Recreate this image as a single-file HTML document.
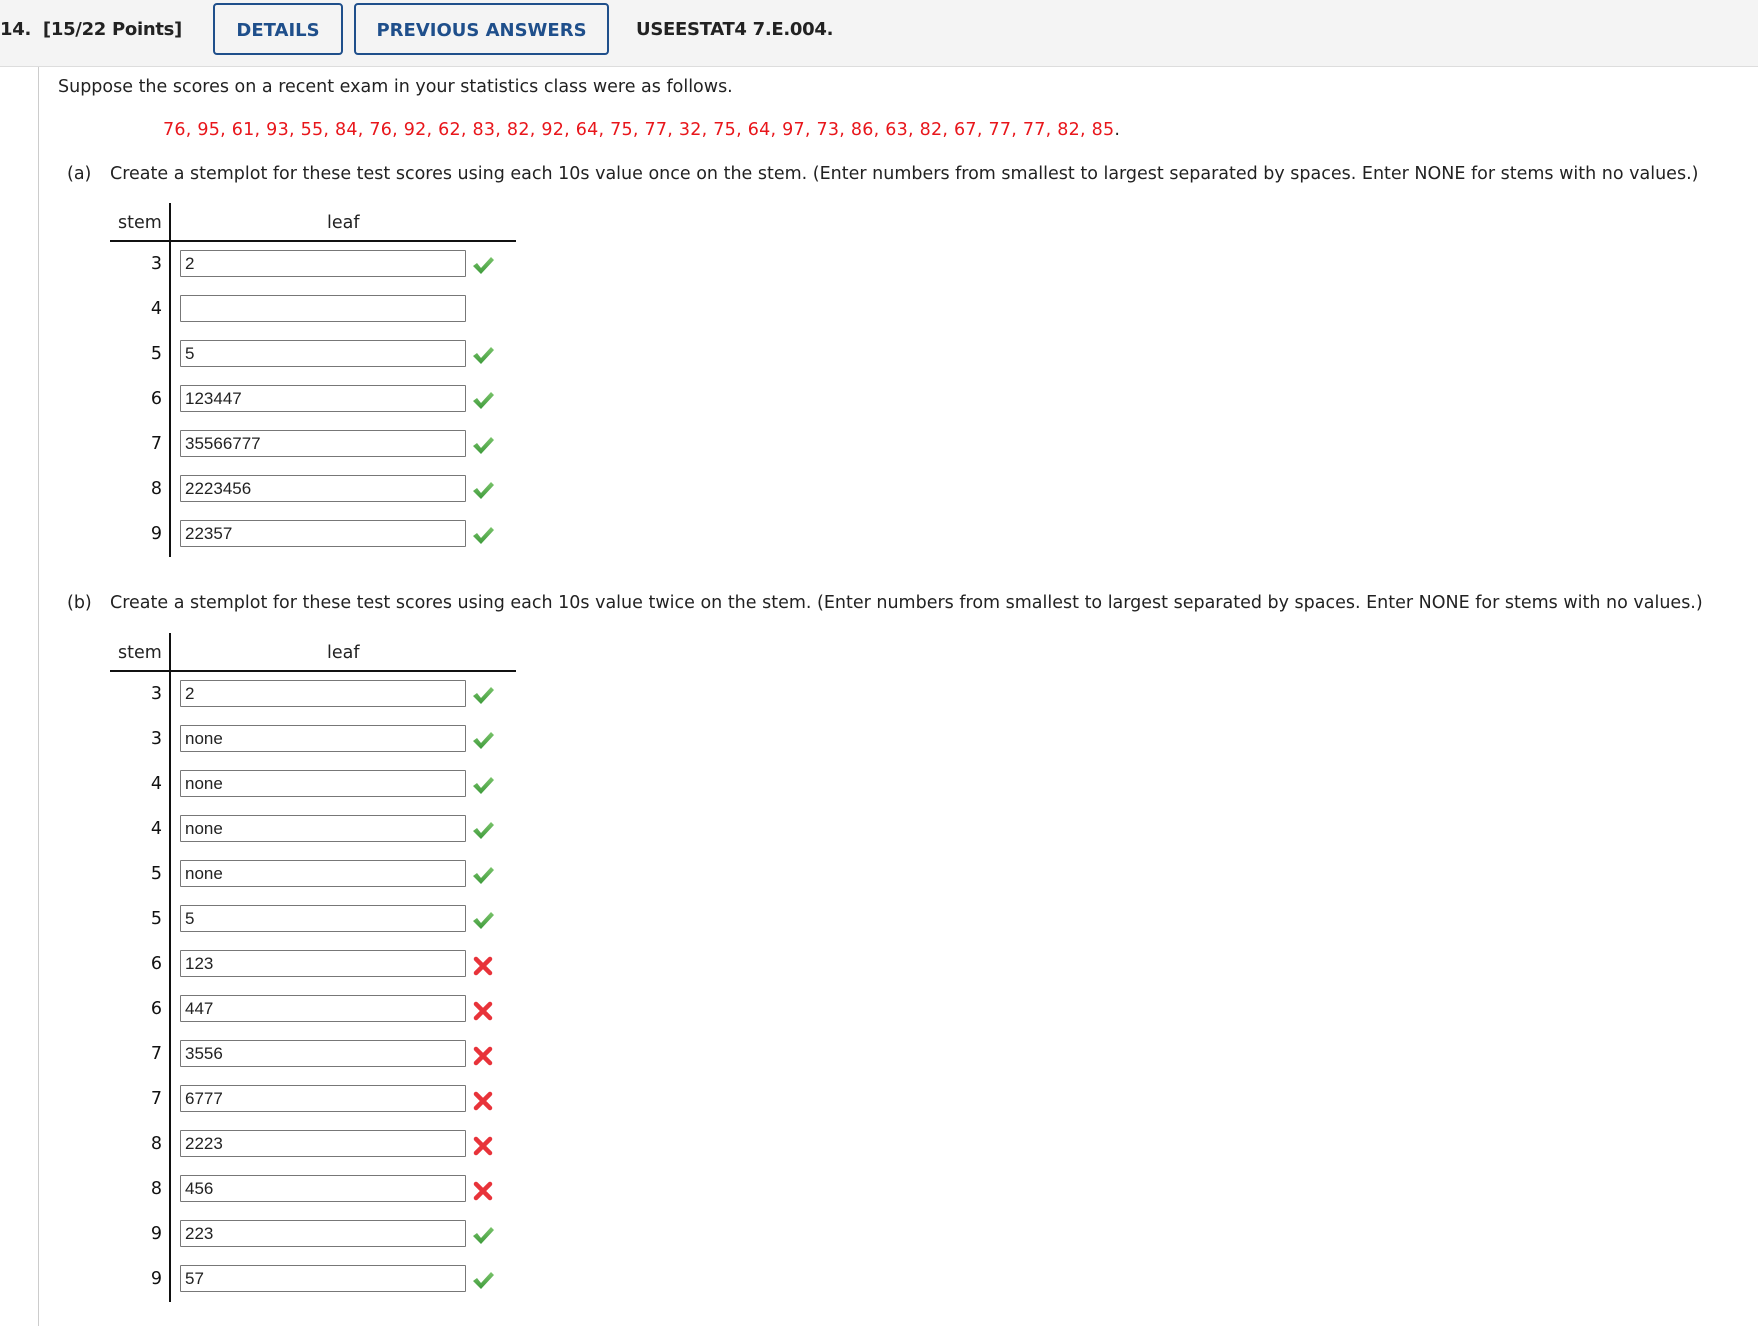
<!DOCTYPE html>
<html><head><meta charset="utf-8"><style>
body{margin:0;width:1758px;height:1326px;position:relative;background:#fff;font-family:"DejaVu Sans","Liberation Sans",sans-serif;color:#222;overflow:hidden}
.hd{position:absolute;left:0;top:0;width:1758px;height:66px;background:#f4f4f4;border-bottom:1px solid #ddd}
.t{position:absolute;white-space:nowrap}
.btn{position:absolute;top:3px;height:48px;border:2px solid #1f4f8b;border-radius:4px;color:#1f4f8b;font-weight:bold;font-size:18px;line-height:51px;text-align:center;box-sizing:content-box}
.vl{position:absolute;background:#ccc}
.s{position:absolute;width:30px;text-align:right;font-size:17.5px;color:#111}
.in{position:absolute;left:180px;width:286px;border:1px solid #777;border-radius:1px;font-family:"Liberation Sans",sans-serif;font-size:17px;line-height:25px;padding-left:4px;box-sizing:border-box;height:27px}
.ic{position:absolute;left:471px;width:24px;height:22px}
</style></head><body>
<div class="hd"></div>
<div class="t" style="left:0;top:19px;font-size:18px;font-weight:bold;color:#222;letter-spacing:-0.3px">14.&nbsp; [15/22 Points]</div>
<div class="btn" style="left:213px;width:126px">DETAILS</div>
<div class="btn" style="left:354px;width:251px">PREVIOUS ANSWERS</div>
<div class="t" style="left:636px;top:19px;font-size:18px;font-weight:bold;color:#222;letter-spacing:-0.3px">USEESTAT4 7.E.004.</div>
<div class="vl" style="left:38px;top:67px;width:1px;height:1259px"></div>
<div class="t" style="left:58px;top:77px;font-size:17.5px">Suppose the scores on a recent exam in your statistics class were as follows.</div>
<div class="t" style="left:163px;top:120px;font-size:17.5px;color:#e8161b;letter-spacing:0.25px">76, 95, 61, 93, 55, 84, 76, 92, 62, 83, 82, 92, 64, 75, 77, 32, 75, 64, 97, 73, 86, 63, 82, 67, 77, 77, 82, 85<span style="color:#222">.</span></div>
<div class="t" style="left:67px;top:164px;font-size:17.5px">(a)</div>
<div class="t" style="left:110px;top:164px;font-size:17.5px">Create a stemplot for these test scores using each 10s value once on the stem. (Enter numbers from smallest to largest separated by spaces. Enter NONE for stems with no values.)</div>
<div class="t" style="left:67px;top:593px;font-size:17.5px">(b)</div>
<div class="t" style="left:110px;top:593px;font-size:17.5px">Create a stemplot for these test scores using each 10s value twice on the stem. (Enter numbers from smallest to largest separated by spaces. Enter NONE for stems with no values.)</div>
<svg width="0" height="0" style="position:absolute"><defs>
<linearGradient id="g" x1="0" y1="0" x2="0" y2="1"><stop offset="0" stop-color="#7bc46c"/><stop offset="1" stop-color="#3d9a3a"/></linearGradient>
<symbol id="ck" viewBox="0 0 24 22"><path d="M2 12 L6 9 L10 14 L20 3 L23 6 L10 20 Z" fill="url(#g)"/></symbol>
<symbol id="x" viewBox="0 0 24 22"><path d="M5 5 L19 19 M19 5 L5 19" stroke="#e8333a" stroke-width="4.5" stroke-linecap="round"/></symbol>
</defs></svg>
<div id="tables"></div>
<script>
function tbl(top,rows){
 var h='';
 h+='<div class="t" style="left:118px;top:'+(top+10)+'px;font-size:17.5px">stem</div>';
 h+='<div class="t" style="left:327px;top:'+(top+10)+'px;font-size:17.5px">leaf</div>';
 h+='<div style="position:absolute;left:110px;top:'+(top+37)+'px;width:406px;height:2px;background:#111"></div>';
 h+='<div style="position:absolute;left:169px;top:'+top+'px;width:2px;height:'+(39+rows.length*45)+'px;background:#111"></div>';
 rows.forEach(function(r,i){
  var y=top+47+i*45;
  h+='<div class="s" style="left:132px;top:'+(y+4)+'px">'+r[0]+'</div>';
  h+='<div class="in" style="top:'+y+'px">'+r[1]+'</div>';
  if(r[2])h+='<svg class="ic" style="top:'+(y+4)+'px"><use href="#'+r[2]+'"/></svg>';
 });
 return h;
}
var a=[[3,'2','ck'],[4,'',''],[5,'5','ck'],[6,'123447','ck'],[7,'35566777','ck'],[8,'2223456','ck'],[9,'22357','ck']];
var b=[[3,'2','ck'],[3,'none','ck'],[4,'none','ck'],[4,'none','ck'],[5,'none','ck'],[5,'5','ck'],[6,'123','x'],[6,'447','x'],[7,'3556','x'],[7,'6777','x'],[8,'2223','x'],[8,'456','x'],[9,'223','ck'],[9,'57','ck']];
document.getElementById('tables').innerHTML=tbl(203,a)+tbl(633,b);
</script>
</body></html>
